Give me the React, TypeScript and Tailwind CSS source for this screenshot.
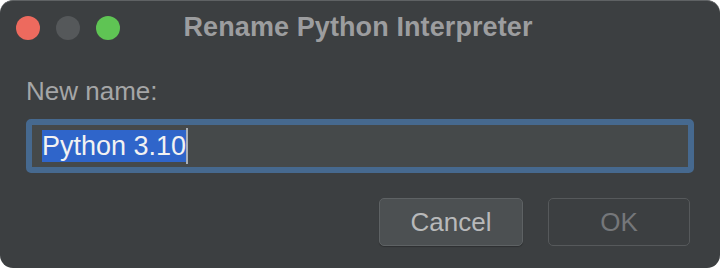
export default function App() {
  return (
    <div className="w-[720px] h-[268px] bg-white font-['Liberation_Sans',Arial,sans-serif]">
      <div className="flex h-full flex-col rounded-[13px] border-t border-[#5f6264] bg-[#3c3f41]">
        {/* title bar */}
        <div className="grid h-[53px] grid-cols-[1fr_auto_1fr] items-center">
          <div className="flex items-center gap-[16px] pl-[16px]">
            <span className="h-[24px] w-[24px] rounded-full bg-[#ed6a5e]" />
            <span className="h-[24px] w-[24px] rounded-full bg-[#55585a]" />
            <span className="h-[24px] w-[24px] rounded-full bg-[#5fc454]" />
          </div>
          <div className="pr-[4px] text-[27px] font-bold leading-[53px] tracking-[0.1px] text-[#9c9d9f]">Rename Python Interpreter</div>
          <div />
        </div>

        <div className="flex flex-col px-[26px]">
          <div className="mt-[21px] text-[26px] leading-[32px] text-[#a5a6a7]">New name:</div>

          <div className="mt-[12px] rounded-[5px] border-[6px] border-[#46698f] bg-[#45494a] pl-[10px] py-[5px]">
            <div className="flex h-[32px] items-center">
              <span className="bg-[#2f65ca] text-[27px] leading-[32px] text-[#f2f2f2]">Python 3.10</span>
              <span className="h-[36px] w-[2px] bg-[#a9b0b8]" />
            </div>
          </div>

          <div className="mt-[25px] flex justify-end gap-[25px] pr-[4px]">
            <button className="h-[48px] w-[144px] rounded-[5px] border border-[#5e6264] bg-[#4c5052] text-[26px] text-[#b8b9ba] shadow-[0_1px_1px_rgba(0,0,0,0.25)]">
              Cancel
            </button>
            <button className="h-[48px] w-[142px] rounded-[5px] border border-[#56595b] bg-[#3c3f41] text-[26px] text-[#75777a]">
              OK
            </button>
          </div>
        </div>
      </div>
    </div>
  );
}
